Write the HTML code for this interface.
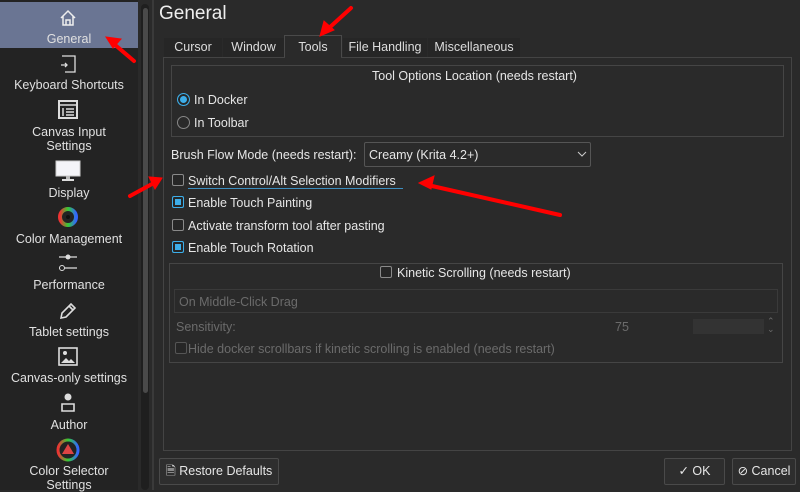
<!DOCTYPE html>
<html><head><style>
*{box-sizing:border-box}
body{margin:0;width:800px;height:490px;background:#2a2a2a;font-family:"Liberation Sans",sans-serif;font-size:12.5px;color:#e6e6e6;position:relative;overflow:hidden}
.a{position:absolute}
#side{left:0;top:0;width:138px;height:490px;background:#232323}
.it{position:absolute;left:0;width:138px;text-align:center;color:#e0e0e0;font-size:12.5px;line-height:14px}
.sel{background:#6a7593}
.box{border:1px solid #454545}
.cb{position:absolute;width:12px;height:12px;border:1px solid #8a8a8a;border-radius:2px;background:#262626}
.cb.on{border-color:#3daee9;background:#3daee9;box-shadow:inset 0 0 0 2px #262626}
.lbl{position:absolute;white-space:nowrap;margin-top:1px}
.dis{color:#6b6b6b}
.btn{position:absolute;border:1px solid #4a4a4a;border-radius:2px;background:#2e2e2e;text-align:center;line-height:24px}
.tab{position:absolute;top:38px;height:19px;background:#262626;text-align:center;line-height:18px;color:#ddd}
</style></head><body>
<div id="side" class="a">
<div class="a sel" style="left:0;top:2px;width:138px;height:46px"></div>
<svg class="a" style="left:58px;top:8px" width="20" height="20" viewBox="0 0 20 20"><path d="M3 10L10 3l7 7M5 8v9h10V8M8 17v-5h4v5" fill="none" stroke="#eee" stroke-width="1.5"/></svg>
<div class="it" style="top:32px">General</div>
<svg class="a" style="left:60px;top:55px" width="16" height="18"><path d="M2 1h13v16H5M1 10h6M5 8l2 2-2 2" fill="none" stroke="#ddd" stroke-width="1.3"/></svg>
<div class="it" style="top:78px">Keyboard Shortcuts</div>
<svg class="a" style="left:58px;top:100px" width="20" height="20"><rect x="1" y="1" width="18" height="17" fill="none" stroke="#ddd" stroke-width="2"/><path d="M1 5h18M5 8v8M8 9h8M8 12h8M8 15h8" stroke="#ddd" stroke-width="1.5"/></svg>
<div class="it" style="top:125px">Canvas Input<br>Settings</div>
<svg class="a" style="left:55px;top:160px" width="26" height="22"><rect x="1" y="1" width="24" height="15" fill="#f4f4f8" stroke="#ccc"/><rect x="11" y="16" width="4" height="3" fill="#bbb"/><rect x="7" y="19" width="12" height="2" fill="#ddd"/></svg>
<div class="it" style="top:186px">Display</div>
<svg class="a" style="left:58px;top:207px" width="20" height="20"><circle cx="10" cy="10" r="8" fill="none" stroke="url(#g)" stroke-width="4"/><defs><linearGradient id="g"><stop offset="0" stop-color="#e33"/><stop offset=".5" stop-color="#3c3"/><stop offset="1" stop-color="#36f"/></linearGradient></defs><circle cx="10" cy="10" r="2" fill="#111"/></svg>
<div class="it" style="top:232px">Color Management</div>
<svg class="a" style="left:58px;top:254px" width="20" height="20"><path d="M1 3h18M1 14h18" stroke="#ddd" stroke-width="1.3"/><circle cx="10" cy="3" r="2.5" fill="#ddd"/><circle cx="4" cy="14" r="2.5" fill="#232323" stroke="#ddd"/></svg>
<div class="it" style="top:278px">Performance</div>
<svg class="a" style="left:58px;top:301px" width="20" height="20"><path d="M3 17l1-5 9-9 4 4-9 9zM11 5l4 4" fill="none" stroke="#ddd" stroke-width="1.6"/></svg>
<div class="it" style="top:325px">Tablet settings</div>
<svg class="a" style="left:58px;top:347px" width="20" height="20"><rect x="1" y="1" width="18" height="17" fill="none" stroke="#ddd" stroke-width="1.6"/><circle cx="7" cy="6" r="2" fill="#ddd"/><path d="M3 16l5-5 3 3 2-2 4 4z" fill="#ddd"/></svg>
<div class="it" style="top:371px">Canvas-only settings</div>
<svg class="a" style="left:60px;top:393px" width="16" height="20"><circle cx="8" cy="4" r="3.5" fill="#ddd"/><path d="M2 18v-7h12v7z" fill="none" stroke="#ddd" stroke-width="1.6"/></svg>
<div class="it" style="top:418px">Author</div>
<svg class="a" style="left:56px;top:438px" width="24" height="24"><circle cx="12" cy="12" r="10" fill="none" stroke="url(#g)" stroke-width="3"/><path d="M12 6l6 10H6z" fill="#d44"/></svg>
<div class="it" style="top:464px">Color Selector<br>Settings</div>
</div>
<div class="a" style="left:141px;top:4px;width:8px;height:486px;background:#1f1f1f;border-radius:4px"></div>
<div class="a" style="left:143px;top:8px;width:5px;height:385px;background:#4a4a4a;border-radius:3px"></div>
<div class="a" style="left:152px;top:0;width:2px;height:490px;background:#3a3a3a"></div>
<div class="a" style="left:159px;top:3px;font-size:19px;color:#eee">General</div>
<div class="tab" style="left:164px;width:58px">Cursor</div>
<div class="tab" style="left:223px;width:61px">Window</div>
<div class="tab" style="left:284px;top:35px;height:23px;width:58px;background:#2a2a2a;border:1px solid #4a4a4a;border-bottom:none;line-height:22px">Tools</div>
<div class="tab" style="left:343px;width:84px">File Handling</div>
<div class="tab" style="left:428px;width:92px">Miscellaneous</div>
<div class="a box" style="left:163px;top:57px;width:629px;height:394px;border-color:#444"></div>
<div class="a" style="left:285px;top:56px;width:56px;height:2px;background:#2a2a2a"></div>
<div class="a box" style="left:171px;top:65px;width:613px;height:72px"></div>
<div class="lbl" style="left:372px;top:68px">Tool Options Location (needs restart)</div>
<div class="a" style="left:177px;top:93px;width:13px;height:13px;border-radius:50%;border:1px solid #3daee9;background:#3daee9;box-shadow:inset 0 0 0 2px #262626"></div>
<div class="lbl" style="left:194px;top:92px">In Docker</div>
<div class="a" style="left:177px;top:116px;width:13px;height:13px;border-radius:50%;border:1px solid #888"></div>
<div class="lbl" style="left:194px;top:115px">In Toolbar</div>
<div class="lbl" style="left:171px;top:147px">Brush Flow Mode (needs restart):</div>
<div class="a box" style="left:364px;top:142px;width:227px;height:25px;border-color:#555;border-radius:2px"></div>
<div class="lbl" style="left:369px;top:147px">Creamy (Krita 4.2+)</div>
<svg class="a" style="left:577px;top:151px" width="10" height="7"><path d="M1 1l4 4 4-4" fill="none" stroke="#ccc"/></svg>
<div class="cb" style="left:172px;top:174px"></div>
<div class="lbl" style="left:188px;top:173px">Switch Control/Alt Selection Modifiers</div>
<div class="a" style="left:188px;top:188px;width:215px;height:1px;background:#3d8ec0"></div>
<div class="cb on" style="left:172px;top:196px"></div>
<div class="lbl" style="left:188px;top:195px">Enable Touch Painting</div>
<div class="cb" style="left:172px;top:219px"></div>
<div class="lbl" style="left:188px;top:218px">Activate transform tool after pasting</div>
<div class="cb on" style="left:172px;top:241px"></div>
<div class="lbl" style="left:188px;top:240px">Enable Touch Rotation</div>
<div class="a box" style="left:169px;top:263px;width:614px;height:100px"></div>
<div class="cb" style="left:380px;top:266px"></div>
<div class="lbl" style="left:397px;top:265px">Kinetic Scrolling (needs restart)</div>
<div class="a box" style="left:174px;top:289px;width:604px;height:24px;border-color:#3a3a3a"></div>
<div class="lbl dis" style="left:179px;top:294px">On Middle-Click Drag</div>
<div class="lbl dis" style="left:176px;top:319px">Sensitivity:</div>
<div class="lbl dis" style="left:615px;top:319px">75</div>
<div class="a" style="left:693px;top:319px;width:71px;height:15px;background:#333"></div>
<div class="lbl dis" style="left:767px;top:316px;font-size:9px;line-height:8px">⌃<br>⌄</div>
<div class="cb" style="left:175px;top:342px;border-color:#555"></div>
<div class="lbl dis" style="left:188px;top:341px">Hide docker scrollbars if kinetic scrolling is enabled (needs restart)</div>
<div class="btn" style="left:159px;top:458px;width:120px;height:27px">🗎 Restore Defaults</div>
<div class="btn" style="left:664px;top:458px;width:61px;height:27px">✓ OK</div>
<div class="btn" style="left:732px;top:458px;width:64px;height:27px">⊘ Cancel</div>
<svg class="a" style="left:0;top:0" width="800" height="490">
<g stroke="#f00" stroke-width="4" fill="#f00" stroke-linecap="round">
<line x1="134" y1="61" x2="114" y2="44"/><path d="M106 37l15 2-8 9z" stroke-width="1"/>
<line x1="351" y1="8" x2="329" y2="28"/><path d="M320 36l4-15 10 9z" stroke-width="1"/>
<line x1="130" y1="196" x2="152" y2="184"/><path d="M162 178l-13-1 6 12z" stroke-width="1"/>
<line x1="560" y1="215" x2="432" y2="186"/><path d="M419 183l15-7-3 13z" stroke-width="1"/>
</g></svg>
</body></html>
